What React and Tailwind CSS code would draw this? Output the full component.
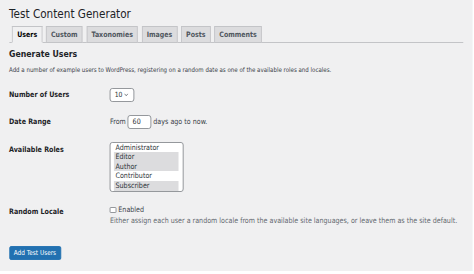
const tabs = ['Users', 'Custom', 'Taxonomies', 'Images', 'Posts', 'Comments'];
const roles = [
  { name: 'Administrator', selected: false },
  { name: 'Editor', selected: true },
  { name: 'Author', selected: true },
  { name: 'Contributor', selected: false },
  { name: 'Subscriber', selected: true },
];

// the screenshot is squeezed horizontally, so the page is laid out wider and scaled on x
function Row({ label, labelClass = '', className = '', children }) {
  return (
    <div className={`flex ${className}`}>
      <div className={`w-[118.8px] shrink-0 text-[7.5px] leading-[9px] font-bold text-[#1d2327] ${labelClass}`}>{label}</div>
      <div className="flex-1">{children}</div>
    </div>
  );
}

export default function App() {
  return (
    <div className="w-[474px] h-[274px] bg-white overflow-hidden font-['DejaVu_Sans',sans-serif] text-[#3c434a]">
      <div className="w-[556px] h-[271px] bg-[#f0f0f1] origin-top-left scale-x-[0.85] pt-[6.7px] px-[10.6px]">
        <h1 className="text-[12.3px] leading-[14px] text-[#1d2327]">Test Content Generator</h1>

        <div className="mt-[5.3px] flex gap-[4.6px] pl-[3.9px] border-b border-[#c3c4c7]">
          {tabs.map((t, i) => (
            <div
              key={t}
              className={`h-[17px] -mb-px px-[4.8px] flex items-center text-[7.4px] leading-none font-bold border border-[#c3c4c7] ${
                i === 0 ? 'bg-[#f0f0f1] border-b-[#f0f0f1] text-black' : 'bg-[#dcdcde] text-[#50575e]'
              }`}
            >
              {t}
            </div>
          ))}
        </div>

        <h2 className="mt-[5.2px] text-[9.2px] leading-[11px] font-bold text-[#1d2327]">Generate Users</h2>
        <p className="mt-[7.2px] text-[6.45px] leading-[9px]">
          Add a number of example users to WordPress, registering on a random date as one of the available roles and locales.
        </p>

        <Row label="Number of Users" className="mt-[12.9px] items-center">
          <div className="w-[28.2px] h-[13.4px] pl-[4.5px] flex items-center gap-[2px] bg-white border border-[#8c8f94] rounded-[3px] text-[7.2px] text-[#2c3338]">
            <span>10</span>
            <svg width="5" height="3.5" viewBox="0 0 10 7" fill="none" stroke="#50575e" strokeWidth="1.6">
              <path d="M1 1.5l4 4 4-4" />
            </svg>
          </div>
        </Row>

        <Row label="Date Range" className="mt-[13.3px] items-center">
          <div className="flex items-center text-[7.5px]">
            <span>From</span>
            <div className="ml-[2.5px] w-[27.4px] h-[14px] pl-[4.5px] flex items-center bg-white border border-[#8c8f94] rounded-[3px] text-[#2c3338]">
              60
            </div>
            <span className="ml-[2.5px]">days ago to now.</span>
          </div>
        </Row>

        <Row label="Available Roles" labelClass="mt-[2.9px]" className="mt-[12.7px] items-start">
          <div className="w-[86.3px] h-[50px] pl-[3.5px] pr-[5px] bg-white border border-[#8c8f94] rounded-[3px] text-[7.5px] leading-[9.6px] text-[#2c3338]">
            {roles.map((r) => (
              <div key={r.name} className={`pl-[2px] ${r.selected ? 'bg-[#dcdcde]' : ''}`}>
                {r.name}
              </div>
            ))}
          </div>
        </Row>

        <Row label="Random Locale" labelClass="mt-[1.9px]" className="mt-[13.3px] items-start">
          <div className="text-[7.5px]">
            <label className="h-[10px] flex items-center gap-[2px]">
              <span className="w-[7.8px] h-[6.7px] bg-white border border-[#8c8f94] rounded-[1px]" />
              <span>Enabled</span>
            </label>
            <p className="mt-[1.4px] leading-[9px] text-[#646970]">
              Either assign each user a random locale from the available site languages, or leave them as the site default.
            </p>
          </div>
        </Row>

        <button className="mt-[20.6px] h-[14px] px-[4.5px] flex items-center bg-[#2271b1] border border-[#2271b1] rounded-[2px] text-white text-[6.8px]">
          Add Test Users
        </button>
      </div>
    </div>
  );
}
